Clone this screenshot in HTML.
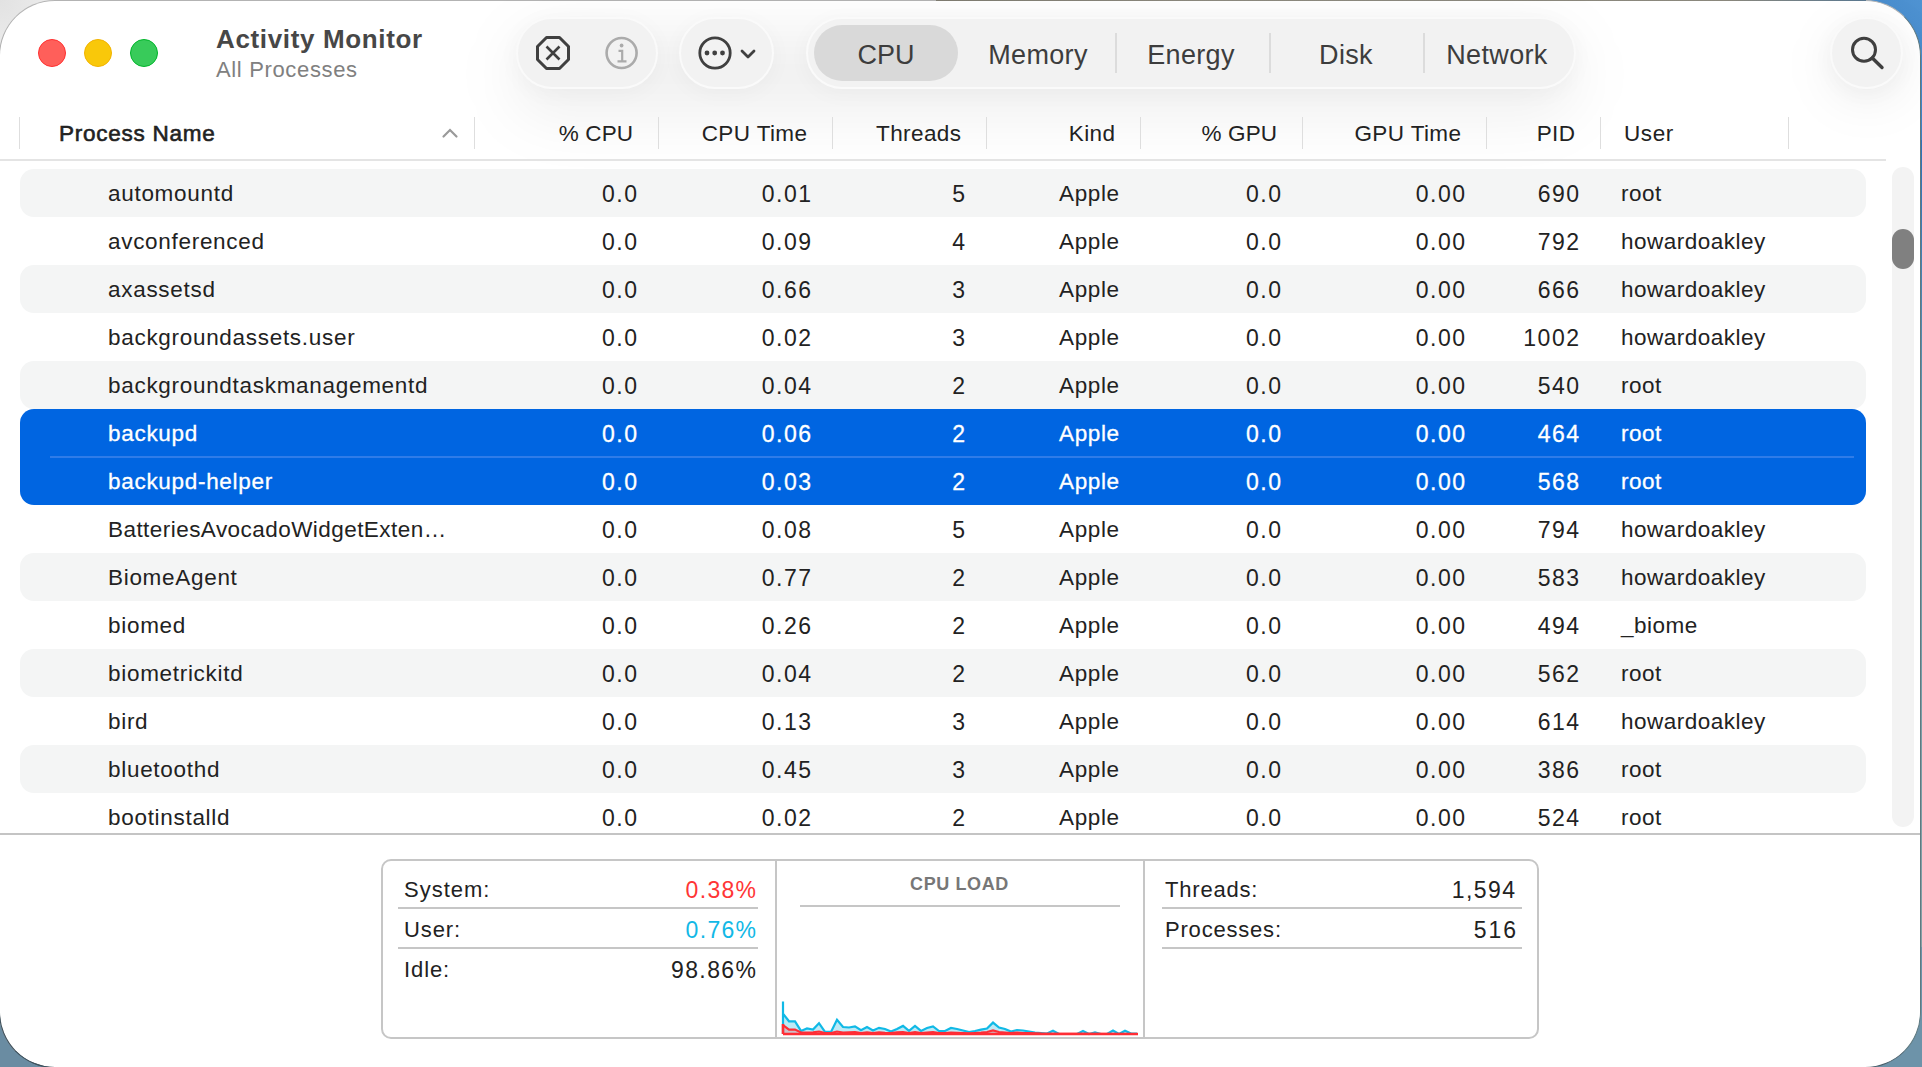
<!DOCTYPE html>
<html><head><meta charset="utf-8"><style>
html,body{margin:0;padding:0;width:1922px;height:1067px;overflow:hidden;background:#fff;}
body{position:relative;font-family:"Liberation Sans", sans-serif;}
.t{position:absolute;white-space:nowrap;}
.r{position:absolute;}
</style></head><body>
<div class="r" style="left:0;top:0;width:120px;height:120px;background:radial-gradient(circle at 0 0,#e2e2e2,#f3f3f3 90px)"></div><div class="r" style="left:1802px;top:0;width:120px;height:140px;background:linear-gradient(225deg,#4f93d2,#2e72b8)"></div><div class="r" style="left:1902px;top:140px;width:20px;height:807px;background:linear-gradient(180deg,#2e72b8,#6f9aa8 40%,#86a0a6)"></div><div class="r" style="left:0;top:947px;width:120px;height:120px;background:#6a8ca2"></div><div class="r" style="left:1802px;top:947px;width:120px;height:120px;background:#6d93a9"></div><div class="r" style="left:-1px;top:0;width:1922px;height:1068px;box-sizing:border-box;background:#fff;border:1px solid #b3b3b3;border-right-color:#5f7a80;border-bottom-color:#4a5f6a;border-left-color:#b0b0b0;border-radius:56px;"></div><div class="r" style="left:-1px;top:900px;width:200px;height:168px;box-sizing:border-box;border-left:1px solid #3e505c;border-bottom:1px solid #3e505c;border-bottom-left-radius:56px;"></div><div class="r" style="left:936px;top:0px;width:930px;height:1px;background:linear-gradient(90deg,#7e7b70,#8d8a7e 30%,#8a877c 85%,#5a7890);border-radius:0px;"></div><div class="r" style="left:38px;top:39px;width:26px;height:26px;border-radius:50%;background:#ff5f5a;border:1px solid #ff3030"></div><div class="r" style="left:84px;top:39px;width:26px;height:26px;border-radius:50%;background:#f9c80a;border:1px solid #f2b300"></div><div class="r" style="left:130px;top:39px;width:26px;height:26px;border-radius:50%;background:#38cb5a;border:1px solid #00b52a"></div><div class="t" style="left:216px;top:26.39px;font-size:26px;line-height:26px;color:#474747;font-weight:700;letter-spacing:0.65px;">Activity Monitor</div><div class="t" style="left:216px;top:58.58px;font-size:22px;line-height:22px;color:#808080;font-weight:400;letter-spacing:0.65px;">All Processes</div><div class="r" style="left:510px;top:28px;width:1070px;height:92px;border-radius:46px;background:rgba(0,0,0,0.055);filter:blur(28px)"></div><div class="r" style="left:1825px;top:25px;width:85px;height:80px;border-radius:40px;background:rgba(0,0,0,0.05);filter:blur(22px)"></div><div class="r" style="left:516px;top:17px;width:142px;height:72px;border-radius:36px;background:#f2f2f2;border:2px solid #fafafa;box-shadow:0 4px 22px rgba(0,0,0,0.035);box-sizing:border-box;"></div><div class="r" style="left:679px;top:17px;width:95px;height:72px;border-radius:36px;background:#f2f2f2;border:2px solid #fafafa;box-shadow:0 4px 22px rgba(0,0,0,0.035);box-sizing:border-box;"></div><div class="r" style="left:806px;top:17px;width:770px;height:72px;border-radius:36px;background:#f2f2f2;border:2px solid #fafafa;box-shadow:0 4px 22px rgba(0,0,0,0.035);box-sizing:border-box;"></div><div class="r" style="left:1830px;top:17px;width:73px;height:72px;border-radius:36px;background:#f2f2f2;border:2px solid #fafafa;box-shadow:0 4px 22px rgba(0,0,0,0.035);box-sizing:border-box;"></div><div class="r" style="left:814px;top:25px;width:144px;height:56px;background:#d9d9d9;border-radius:28px;"></div><div class="r" style="left:1115px;top:33px;width:1.5px;height:40px;background:#dcdcdc;border-radius:0px;"></div><div class="r" style="left:1269px;top:33px;width:1.5px;height:40px;background:#dcdcdc;border-radius:0px;"></div><div class="r" style="left:1423px;top:33px;width:1.5px;height:40px;background:#dcdcdc;border-radius:0px;"></div><div class="t" style="left:586px;width:600px;text-align:center;top:41.74px;font-size:27px;line-height:27px;color:#3d3d3d;font-weight:400;letter-spacing:0px;">CPU</div><div class="t" style="left:738px;width:600px;text-align:center;top:41.74px;font-size:27px;line-height:27px;color:#3d3d3d;font-weight:400;letter-spacing:0.35px;">Memory</div><div class="t" style="left:891px;width:600px;text-align:center;top:41.74px;font-size:27px;line-height:27px;color:#3d3d3d;font-weight:400;letter-spacing:0.35px;">Energy</div><div class="t" style="left:1046px;width:600px;text-align:center;top:41.74px;font-size:27px;line-height:27px;color:#3d3d3d;font-weight:400;letter-spacing:0.35px;">Disk</div><div class="t" style="left:1197px;width:600px;text-align:center;top:41.74px;font-size:27px;line-height:27px;color:#3d3d3d;font-weight:400;letter-spacing:0.35px;">Network</div><svg class="r" style="left:530px;top:30px" width="46" height="46" viewBox="0 0 46 46">
<polygon points="16.5,7.5 29.5,7.5 38.5,16.5 38.5,29.5 29.5,38.5 16.5,38.5 7.5,29.5 7.5,16.5" fill="none" stroke="#404040" stroke-width="3" stroke-linejoin="round"/>
<path d="M16.5 16.5 L29.5 29.5 M29.5 16.5 L16.5 29.5" stroke="#404040" stroke-width="2.6" stroke-linecap="butt"/>
</svg><svg class="r" style="left:598px;top:30px" width="46" height="46" viewBox="0 0 46 46">
<circle cx="23.6" cy="23" r="15" fill="none" stroke="#ababab" stroke-width="2.6"/>
<circle cx="23.6" cy="15.5" r="1.9" fill="#ababab"/>
<path d="M20.5 20.9 H24.2 V31.5 M19.5 31.4 H28.5" fill="none" stroke="#ababab" stroke-width="2.2"/>
</svg><svg class="r" style="left:692px;top:30px" width="80" height="46" viewBox="0 0 80 46">
<circle cx="23" cy="23" r="15.2" fill="none" stroke="#404040" stroke-width="2.8"/>
<circle cx="15" cy="23" r="2.4" fill="#404040"/><circle cx="22.7" cy="23" r="2.4" fill="#404040"/><circle cx="30.5" cy="23" r="2.4" fill="#404040"/>
<path d="M50 21 L56 27 L62 21" fill="none" stroke="#404040" stroke-width="2.8" stroke-linecap="round" stroke-linejoin="round"/>
</svg><svg class="r" style="left:1840px;top:26px" width="54" height="54" viewBox="0 0 54 54">
<circle cx="24" cy="23.7" r="11.5" fill="none" stroke="#3f3f3f" stroke-width="3"/>
<path d="M32.3 32 L42 41.5" stroke="#3f3f3f" stroke-width="3.4" stroke-linecap="round"/>
</svg><div class="r" style="left:18.5px;top:117px;width:1.5px;height:32px;background:#dedede;border-radius:0px;"></div><div class="r" style="left:473.5px;top:117px;width:1.5px;height:32px;background:#dedede;border-radius:0px;"></div><div class="r" style="left:657.5px;top:117px;width:1.5px;height:32px;background:#dedede;border-radius:0px;"></div><div class="r" style="left:831.5px;top:117px;width:1.5px;height:32px;background:#dedede;border-radius:0px;"></div><div class="r" style="left:985.5px;top:117px;width:1.5px;height:32px;background:#dedede;border-radius:0px;"></div><div class="r" style="left:1139.5px;top:117px;width:1.5px;height:32px;background:#dedede;border-radius:0px;"></div><div class="r" style="left:1301.5px;top:117px;width:1.5px;height:32px;background:#dedede;border-radius:0px;"></div><div class="r" style="left:1485.5px;top:117px;width:1.5px;height:32px;background:#dedede;border-radius:0px;"></div><div class="r" style="left:1599.5px;top:117px;width:1.5px;height:32px;background:#dedede;border-radius:0px;"></div><div class="r" style="left:1787.5px;top:117px;width:1.5px;height:32px;background:#dedede;border-radius:0px;"></div><div class="t" style="left:59px;top:122.95px;font-size:22.5px;line-height:22.5px;color:#222;-webkit-text-stroke:0.6px #222;font-weight:400;letter-spacing:0.75px;">Process Name</div><svg class="r" style="left:440px;top:125px" width="20" height="16" viewBox="0 0 20 16">
<path d="M3.5 11.5 L10 5 L16.5 11.5" fill="none" stroke="#9a9a9a" stroke-width="2.2" stroke-linecap="round"/></svg><div class="t" style="right:1288.90px;text-align:right;top:122.95px;font-size:22.5px;line-height:22.5px;color:#222;font-weight:400;letter-spacing:0.1px;">% CPU</div><div class="t" style="right:1114.60px;text-align:right;top:122.95px;font-size:22.5px;line-height:22.5px;color:#222;font-weight:400;letter-spacing:0.4px;">CPU Time</div><div class="t" style="right:960.60px;text-align:right;top:122.95px;font-size:22.5px;line-height:22.5px;color:#222;font-weight:400;letter-spacing:0.4px;">Threads</div><div class="t" style="right:806.60px;text-align:right;top:122.95px;font-size:22.5px;line-height:22.5px;color:#222;font-weight:400;letter-spacing:0.4px;">Kind</div><div class="t" style="right:644.90px;text-align:right;top:122.95px;font-size:22.5px;line-height:22.5px;color:#222;font-weight:400;letter-spacing:0.1px;">% GPU</div><div class="t" style="right:460.60px;text-align:right;top:122.95px;font-size:22.5px;line-height:22.5px;color:#222;font-weight:400;letter-spacing:0.4px;">GPU Time</div><div class="t" style="right:346.60px;text-align:right;top:122.95px;font-size:22.5px;line-height:22.5px;color:#222;font-weight:400;letter-spacing:0.4px;">PID</div><div class="t" style="left:1624px;top:122.95px;font-size:22.5px;line-height:22.5px;color:#222;font-weight:400;letter-spacing:0.6px;">User</div><div class="r" style="left:0px;top:159px;width:1886px;height:2px;background:#e4e4e4;border-radius:0px;"></div><div class="r" style="left:20px;top:169px;width:1846px;height:48px;background:#f4f5f5;border-radius:14px;"></div><div class="r" style="left:20px;top:265px;width:1846px;height:48px;background:#f4f5f5;border-radius:14px;"></div><div class="r" style="left:20px;top:361px;width:1846px;height:48px;background:#f4f5f5;border-radius:14px;"></div><div class="r" style="left:20px;top:553px;width:1846px;height:48px;background:#f4f5f5;border-radius:14px;"></div><div class="r" style="left:20px;top:649px;width:1846px;height:48px;background:#f4f5f5;border-radius:14px;"></div><div class="r" style="left:20px;top:745px;width:1846px;height:48px;background:#f4f5f5;border-radius:14px;"></div><div class="r" style="left:20px;top:409px;width:1846px;height:96px;background:#0065e1;border-radius:14px;"></div><div class="r" style="left:50px;top:456px;width:1804px;height:1.5px;background:#2f7ce8;border-radius:0px;"></div><div class="t" style="left:108px;top:182.95px;font-size:22.5px;line-height:22.5px;color:#222;font-weight:400;letter-spacing:0.7px;">automountd</div><div class="t" style="right:1283.50px;text-align:right;top:182.53px;font-size:23px;line-height:23px;color:#222;font-weight:400;letter-spacing:1.5px;">0.0</div><div class="t" style="right:1109.50px;text-align:right;top:182.53px;font-size:23px;line-height:23px;color:#222;font-weight:400;letter-spacing:1.5px;">0.01</div><div class="t" style="right:955.50px;text-align:right;top:182.53px;font-size:23px;line-height:23px;color:#222;font-weight:400;letter-spacing:1.5px;">5</div><div class="t" style="right:802.40px;text-align:right;top:182.95px;font-size:22.5px;line-height:22.5px;color:#222;font-weight:400;letter-spacing:0.6px;">Apple</div><div class="t" style="right:639.50px;text-align:right;top:182.53px;font-size:23px;line-height:23px;color:#222;font-weight:400;letter-spacing:1.5px;">0.0</div><div class="t" style="right:455.50px;text-align:right;top:182.53px;font-size:23px;line-height:23px;color:#222;font-weight:400;letter-spacing:1.5px;">0.00</div><div class="t" style="right:341.50px;text-align:right;top:182.53px;font-size:23px;line-height:23px;color:#222;font-weight:400;letter-spacing:1.5px;">690</div><div class="t" style="left:1621px;top:182.95px;font-size:22.5px;line-height:22.5px;color:#222;font-weight:400;letter-spacing:0.5px;">root</div><div class="t" style="left:108px;top:230.95px;font-size:22.5px;line-height:22.5px;color:#222;font-weight:400;letter-spacing:0.7px;">avconferenced</div><div class="t" style="right:1283.50px;text-align:right;top:230.53px;font-size:23px;line-height:23px;color:#222;font-weight:400;letter-spacing:1.5px;">0.0</div><div class="t" style="right:1109.50px;text-align:right;top:230.53px;font-size:23px;line-height:23px;color:#222;font-weight:400;letter-spacing:1.5px;">0.09</div><div class="t" style="right:955.50px;text-align:right;top:230.53px;font-size:23px;line-height:23px;color:#222;font-weight:400;letter-spacing:1.5px;">4</div><div class="t" style="right:802.40px;text-align:right;top:230.95px;font-size:22.5px;line-height:22.5px;color:#222;font-weight:400;letter-spacing:0.6px;">Apple</div><div class="t" style="right:639.50px;text-align:right;top:230.53px;font-size:23px;line-height:23px;color:#222;font-weight:400;letter-spacing:1.5px;">0.0</div><div class="t" style="right:455.50px;text-align:right;top:230.53px;font-size:23px;line-height:23px;color:#222;font-weight:400;letter-spacing:1.5px;">0.00</div><div class="t" style="right:341.50px;text-align:right;top:230.53px;font-size:23px;line-height:23px;color:#222;font-weight:400;letter-spacing:1.5px;">792</div><div class="t" style="left:1621px;top:230.95px;font-size:22.5px;line-height:22.5px;color:#222;font-weight:400;letter-spacing:0.5px;">howardoakley</div><div class="t" style="left:108px;top:278.95px;font-size:22.5px;line-height:22.5px;color:#222;font-weight:400;letter-spacing:0.7px;">axassetsd</div><div class="t" style="right:1283.50px;text-align:right;top:278.53px;font-size:23px;line-height:23px;color:#222;font-weight:400;letter-spacing:1.5px;">0.0</div><div class="t" style="right:1109.50px;text-align:right;top:278.53px;font-size:23px;line-height:23px;color:#222;font-weight:400;letter-spacing:1.5px;">0.66</div><div class="t" style="right:955.50px;text-align:right;top:278.53px;font-size:23px;line-height:23px;color:#222;font-weight:400;letter-spacing:1.5px;">3</div><div class="t" style="right:802.40px;text-align:right;top:278.95px;font-size:22.5px;line-height:22.5px;color:#222;font-weight:400;letter-spacing:0.6px;">Apple</div><div class="t" style="right:639.50px;text-align:right;top:278.53px;font-size:23px;line-height:23px;color:#222;font-weight:400;letter-spacing:1.5px;">0.0</div><div class="t" style="right:455.50px;text-align:right;top:278.53px;font-size:23px;line-height:23px;color:#222;font-weight:400;letter-spacing:1.5px;">0.00</div><div class="t" style="right:341.50px;text-align:right;top:278.53px;font-size:23px;line-height:23px;color:#222;font-weight:400;letter-spacing:1.5px;">666</div><div class="t" style="left:1621px;top:278.95px;font-size:22.5px;line-height:22.5px;color:#222;font-weight:400;letter-spacing:0.5px;">howardoakley</div><div class="t" style="left:108px;top:326.95px;font-size:22.5px;line-height:22.5px;color:#222;font-weight:400;letter-spacing:0.7px;">backgroundassets.user</div><div class="t" style="right:1283.50px;text-align:right;top:326.53px;font-size:23px;line-height:23px;color:#222;font-weight:400;letter-spacing:1.5px;">0.0</div><div class="t" style="right:1109.50px;text-align:right;top:326.53px;font-size:23px;line-height:23px;color:#222;font-weight:400;letter-spacing:1.5px;">0.02</div><div class="t" style="right:955.50px;text-align:right;top:326.53px;font-size:23px;line-height:23px;color:#222;font-weight:400;letter-spacing:1.5px;">3</div><div class="t" style="right:802.40px;text-align:right;top:326.95px;font-size:22.5px;line-height:22.5px;color:#222;font-weight:400;letter-spacing:0.6px;">Apple</div><div class="t" style="right:639.50px;text-align:right;top:326.53px;font-size:23px;line-height:23px;color:#222;font-weight:400;letter-spacing:1.5px;">0.0</div><div class="t" style="right:455.50px;text-align:right;top:326.53px;font-size:23px;line-height:23px;color:#222;font-weight:400;letter-spacing:1.5px;">0.00</div><div class="t" style="right:341.50px;text-align:right;top:326.53px;font-size:23px;line-height:23px;color:#222;font-weight:400;letter-spacing:1.5px;">1002</div><div class="t" style="left:1621px;top:326.95px;font-size:22.5px;line-height:22.5px;color:#222;font-weight:400;letter-spacing:0.5px;">howardoakley</div><div class="t" style="left:108px;top:374.95px;font-size:22.5px;line-height:22.5px;color:#222;font-weight:400;letter-spacing:0.7px;">backgroundtaskmanagementd</div><div class="t" style="right:1283.50px;text-align:right;top:374.53px;font-size:23px;line-height:23px;color:#222;font-weight:400;letter-spacing:1.5px;">0.0</div><div class="t" style="right:1109.50px;text-align:right;top:374.53px;font-size:23px;line-height:23px;color:#222;font-weight:400;letter-spacing:1.5px;">0.04</div><div class="t" style="right:955.50px;text-align:right;top:374.53px;font-size:23px;line-height:23px;color:#222;font-weight:400;letter-spacing:1.5px;">2</div><div class="t" style="right:802.40px;text-align:right;top:374.95px;font-size:22.5px;line-height:22.5px;color:#222;font-weight:400;letter-spacing:0.6px;">Apple</div><div class="t" style="right:639.50px;text-align:right;top:374.53px;font-size:23px;line-height:23px;color:#222;font-weight:400;letter-spacing:1.5px;">0.0</div><div class="t" style="right:455.50px;text-align:right;top:374.53px;font-size:23px;line-height:23px;color:#222;font-weight:400;letter-spacing:1.5px;">0.00</div><div class="t" style="right:341.50px;text-align:right;top:374.53px;font-size:23px;line-height:23px;color:#222;font-weight:400;letter-spacing:1.5px;">540</div><div class="t" style="left:1621px;top:374.95px;font-size:22.5px;line-height:22.5px;color:#222;font-weight:400;letter-spacing:0.5px;">root</div><div class="t" style="left:108px;top:422.95px;font-size:22.5px;line-height:22.5px;color:#fff;-webkit-text-stroke:0.3px #fff;font-weight:400;letter-spacing:0.7px;">backupd</div><div class="t" style="right:1283.50px;text-align:right;top:422.53px;font-size:23px;line-height:23px;color:#fff;-webkit-text-stroke:0.3px #fff;font-weight:400;letter-spacing:1.5px;">0.0</div><div class="t" style="right:1109.50px;text-align:right;top:422.53px;font-size:23px;line-height:23px;color:#fff;-webkit-text-stroke:0.3px #fff;font-weight:400;letter-spacing:1.5px;">0.06</div><div class="t" style="right:955.50px;text-align:right;top:422.53px;font-size:23px;line-height:23px;color:#fff;-webkit-text-stroke:0.3px #fff;font-weight:400;letter-spacing:1.5px;">2</div><div class="t" style="right:802.40px;text-align:right;top:422.95px;font-size:22.5px;line-height:22.5px;color:#fff;-webkit-text-stroke:0.3px #fff;font-weight:400;letter-spacing:0.6px;">Apple</div><div class="t" style="right:639.50px;text-align:right;top:422.53px;font-size:23px;line-height:23px;color:#fff;-webkit-text-stroke:0.3px #fff;font-weight:400;letter-spacing:1.5px;">0.0</div><div class="t" style="right:455.50px;text-align:right;top:422.53px;font-size:23px;line-height:23px;color:#fff;-webkit-text-stroke:0.3px #fff;font-weight:400;letter-spacing:1.5px;">0.00</div><div class="t" style="right:341.50px;text-align:right;top:422.53px;font-size:23px;line-height:23px;color:#fff;-webkit-text-stroke:0.3px #fff;font-weight:400;letter-spacing:1.5px;">464</div><div class="t" style="left:1621px;top:422.95px;font-size:22.5px;line-height:22.5px;color:#fff;-webkit-text-stroke:0.3px #fff;font-weight:400;letter-spacing:0.5px;">root</div><div class="t" style="left:108px;top:470.95px;font-size:22.5px;line-height:22.5px;color:#fff;-webkit-text-stroke:0.3px #fff;font-weight:400;letter-spacing:0.7px;">backupd-helper</div><div class="t" style="right:1283.50px;text-align:right;top:470.53px;font-size:23px;line-height:23px;color:#fff;-webkit-text-stroke:0.3px #fff;font-weight:400;letter-spacing:1.5px;">0.0</div><div class="t" style="right:1109.50px;text-align:right;top:470.53px;font-size:23px;line-height:23px;color:#fff;-webkit-text-stroke:0.3px #fff;font-weight:400;letter-spacing:1.5px;">0.03</div><div class="t" style="right:955.50px;text-align:right;top:470.53px;font-size:23px;line-height:23px;color:#fff;-webkit-text-stroke:0.3px #fff;font-weight:400;letter-spacing:1.5px;">2</div><div class="t" style="right:802.40px;text-align:right;top:470.95px;font-size:22.5px;line-height:22.5px;color:#fff;-webkit-text-stroke:0.3px #fff;font-weight:400;letter-spacing:0.6px;">Apple</div><div class="t" style="right:639.50px;text-align:right;top:470.53px;font-size:23px;line-height:23px;color:#fff;-webkit-text-stroke:0.3px #fff;font-weight:400;letter-spacing:1.5px;">0.0</div><div class="t" style="right:455.50px;text-align:right;top:470.53px;font-size:23px;line-height:23px;color:#fff;-webkit-text-stroke:0.3px #fff;font-weight:400;letter-spacing:1.5px;">0.00</div><div class="t" style="right:341.50px;text-align:right;top:470.53px;font-size:23px;line-height:23px;color:#fff;-webkit-text-stroke:0.3px #fff;font-weight:400;letter-spacing:1.5px;">568</div><div class="t" style="left:1621px;top:470.95px;font-size:22.5px;line-height:22.5px;color:#fff;-webkit-text-stroke:0.3px #fff;font-weight:400;letter-spacing:0.5px;">root</div><div class="t" style="left:108px;top:518.95px;font-size:22.5px;line-height:22.5px;color:#222;font-weight:400;letter-spacing:0.45px;">BatteriesAvocadoWidgetExten<span style="letter-spacing:-3px">…</span></div><div class="t" style="right:1283.50px;text-align:right;top:518.53px;font-size:23px;line-height:23px;color:#222;font-weight:400;letter-spacing:1.5px;">0.0</div><div class="t" style="right:1109.50px;text-align:right;top:518.53px;font-size:23px;line-height:23px;color:#222;font-weight:400;letter-spacing:1.5px;">0.08</div><div class="t" style="right:955.50px;text-align:right;top:518.53px;font-size:23px;line-height:23px;color:#222;font-weight:400;letter-spacing:1.5px;">5</div><div class="t" style="right:802.40px;text-align:right;top:518.95px;font-size:22.5px;line-height:22.5px;color:#222;font-weight:400;letter-spacing:0.6px;">Apple</div><div class="t" style="right:639.50px;text-align:right;top:518.53px;font-size:23px;line-height:23px;color:#222;font-weight:400;letter-spacing:1.5px;">0.0</div><div class="t" style="right:455.50px;text-align:right;top:518.53px;font-size:23px;line-height:23px;color:#222;font-weight:400;letter-spacing:1.5px;">0.00</div><div class="t" style="right:341.50px;text-align:right;top:518.53px;font-size:23px;line-height:23px;color:#222;font-weight:400;letter-spacing:1.5px;">794</div><div class="t" style="left:1621px;top:518.95px;font-size:22.5px;line-height:22.5px;color:#222;font-weight:400;letter-spacing:0.5px;">howardoakley</div><div class="t" style="left:108px;top:566.95px;font-size:22.5px;line-height:22.5px;color:#222;font-weight:400;letter-spacing:0.7px;">BiomeAgent</div><div class="t" style="right:1283.50px;text-align:right;top:566.53px;font-size:23px;line-height:23px;color:#222;font-weight:400;letter-spacing:1.5px;">0.0</div><div class="t" style="right:1109.50px;text-align:right;top:566.53px;font-size:23px;line-height:23px;color:#222;font-weight:400;letter-spacing:1.5px;">0.77</div><div class="t" style="right:955.50px;text-align:right;top:566.53px;font-size:23px;line-height:23px;color:#222;font-weight:400;letter-spacing:1.5px;">2</div><div class="t" style="right:802.40px;text-align:right;top:566.95px;font-size:22.5px;line-height:22.5px;color:#222;font-weight:400;letter-spacing:0.6px;">Apple</div><div class="t" style="right:639.50px;text-align:right;top:566.53px;font-size:23px;line-height:23px;color:#222;font-weight:400;letter-spacing:1.5px;">0.0</div><div class="t" style="right:455.50px;text-align:right;top:566.53px;font-size:23px;line-height:23px;color:#222;font-weight:400;letter-spacing:1.5px;">0.00</div><div class="t" style="right:341.50px;text-align:right;top:566.53px;font-size:23px;line-height:23px;color:#222;font-weight:400;letter-spacing:1.5px;">583</div><div class="t" style="left:1621px;top:566.95px;font-size:22.5px;line-height:22.5px;color:#222;font-weight:400;letter-spacing:0.5px;">howardoakley</div><div class="t" style="left:108px;top:614.95px;font-size:22.5px;line-height:22.5px;color:#222;font-weight:400;letter-spacing:0.7px;">biomed</div><div class="t" style="right:1283.50px;text-align:right;top:614.53px;font-size:23px;line-height:23px;color:#222;font-weight:400;letter-spacing:1.5px;">0.0</div><div class="t" style="right:1109.50px;text-align:right;top:614.53px;font-size:23px;line-height:23px;color:#222;font-weight:400;letter-spacing:1.5px;">0.26</div><div class="t" style="right:955.50px;text-align:right;top:614.53px;font-size:23px;line-height:23px;color:#222;font-weight:400;letter-spacing:1.5px;">2</div><div class="t" style="right:802.40px;text-align:right;top:614.95px;font-size:22.5px;line-height:22.5px;color:#222;font-weight:400;letter-spacing:0.6px;">Apple</div><div class="t" style="right:639.50px;text-align:right;top:614.53px;font-size:23px;line-height:23px;color:#222;font-weight:400;letter-spacing:1.5px;">0.0</div><div class="t" style="right:455.50px;text-align:right;top:614.53px;font-size:23px;line-height:23px;color:#222;font-weight:400;letter-spacing:1.5px;">0.00</div><div class="t" style="right:341.50px;text-align:right;top:614.53px;font-size:23px;line-height:23px;color:#222;font-weight:400;letter-spacing:1.5px;">494</div><div class="t" style="left:1621px;top:614.95px;font-size:22.5px;line-height:22.5px;color:#222;font-weight:400;letter-spacing:0.5px;">_biome</div><div class="t" style="left:108px;top:662.95px;font-size:22.5px;line-height:22.5px;color:#222;font-weight:400;letter-spacing:0.7px;">biometrickitd</div><div class="t" style="right:1283.50px;text-align:right;top:662.53px;font-size:23px;line-height:23px;color:#222;font-weight:400;letter-spacing:1.5px;">0.0</div><div class="t" style="right:1109.50px;text-align:right;top:662.53px;font-size:23px;line-height:23px;color:#222;font-weight:400;letter-spacing:1.5px;">0.04</div><div class="t" style="right:955.50px;text-align:right;top:662.53px;font-size:23px;line-height:23px;color:#222;font-weight:400;letter-spacing:1.5px;">2</div><div class="t" style="right:802.40px;text-align:right;top:662.95px;font-size:22.5px;line-height:22.5px;color:#222;font-weight:400;letter-spacing:0.6px;">Apple</div><div class="t" style="right:639.50px;text-align:right;top:662.53px;font-size:23px;line-height:23px;color:#222;font-weight:400;letter-spacing:1.5px;">0.0</div><div class="t" style="right:455.50px;text-align:right;top:662.53px;font-size:23px;line-height:23px;color:#222;font-weight:400;letter-spacing:1.5px;">0.00</div><div class="t" style="right:341.50px;text-align:right;top:662.53px;font-size:23px;line-height:23px;color:#222;font-weight:400;letter-spacing:1.5px;">562</div><div class="t" style="left:1621px;top:662.95px;font-size:22.5px;line-height:22.5px;color:#222;font-weight:400;letter-spacing:0.5px;">root</div><div class="t" style="left:108px;top:710.95px;font-size:22.5px;line-height:22.5px;color:#222;font-weight:400;letter-spacing:0.7px;">bird</div><div class="t" style="right:1283.50px;text-align:right;top:710.53px;font-size:23px;line-height:23px;color:#222;font-weight:400;letter-spacing:1.5px;">0.0</div><div class="t" style="right:1109.50px;text-align:right;top:710.53px;font-size:23px;line-height:23px;color:#222;font-weight:400;letter-spacing:1.5px;">0.13</div><div class="t" style="right:955.50px;text-align:right;top:710.53px;font-size:23px;line-height:23px;color:#222;font-weight:400;letter-spacing:1.5px;">3</div><div class="t" style="right:802.40px;text-align:right;top:710.95px;font-size:22.5px;line-height:22.5px;color:#222;font-weight:400;letter-spacing:0.6px;">Apple</div><div class="t" style="right:639.50px;text-align:right;top:710.53px;font-size:23px;line-height:23px;color:#222;font-weight:400;letter-spacing:1.5px;">0.0</div><div class="t" style="right:455.50px;text-align:right;top:710.53px;font-size:23px;line-height:23px;color:#222;font-weight:400;letter-spacing:1.5px;">0.00</div><div class="t" style="right:341.50px;text-align:right;top:710.53px;font-size:23px;line-height:23px;color:#222;font-weight:400;letter-spacing:1.5px;">614</div><div class="t" style="left:1621px;top:710.95px;font-size:22.5px;line-height:22.5px;color:#222;font-weight:400;letter-spacing:0.5px;">howardoakley</div><div class="t" style="left:108px;top:758.95px;font-size:22.5px;line-height:22.5px;color:#222;font-weight:400;letter-spacing:0.7px;">bluetoothd</div><div class="t" style="right:1283.50px;text-align:right;top:758.53px;font-size:23px;line-height:23px;color:#222;font-weight:400;letter-spacing:1.5px;">0.0</div><div class="t" style="right:1109.50px;text-align:right;top:758.53px;font-size:23px;line-height:23px;color:#222;font-weight:400;letter-spacing:1.5px;">0.45</div><div class="t" style="right:955.50px;text-align:right;top:758.53px;font-size:23px;line-height:23px;color:#222;font-weight:400;letter-spacing:1.5px;">3</div><div class="t" style="right:802.40px;text-align:right;top:758.95px;font-size:22.5px;line-height:22.5px;color:#222;font-weight:400;letter-spacing:0.6px;">Apple</div><div class="t" style="right:639.50px;text-align:right;top:758.53px;font-size:23px;line-height:23px;color:#222;font-weight:400;letter-spacing:1.5px;">0.0</div><div class="t" style="right:455.50px;text-align:right;top:758.53px;font-size:23px;line-height:23px;color:#222;font-weight:400;letter-spacing:1.5px;">0.00</div><div class="t" style="right:341.50px;text-align:right;top:758.53px;font-size:23px;line-height:23px;color:#222;font-weight:400;letter-spacing:1.5px;">386</div><div class="t" style="left:1621px;top:758.95px;font-size:22.5px;line-height:22.5px;color:#222;font-weight:400;letter-spacing:0.5px;">root</div><div class="t" style="left:108px;top:806.95px;font-size:22.5px;line-height:22.5px;color:#222;font-weight:400;letter-spacing:0.7px;">bootinstalld</div><div class="t" style="right:1283.50px;text-align:right;top:806.53px;font-size:23px;line-height:23px;color:#222;font-weight:400;letter-spacing:1.5px;">0.0</div><div class="t" style="right:1109.50px;text-align:right;top:806.53px;font-size:23px;line-height:23px;color:#222;font-weight:400;letter-spacing:1.5px;">0.02</div><div class="t" style="right:955.50px;text-align:right;top:806.53px;font-size:23px;line-height:23px;color:#222;font-weight:400;letter-spacing:1.5px;">2</div><div class="t" style="right:802.40px;text-align:right;top:806.95px;font-size:22.5px;line-height:22.5px;color:#222;font-weight:400;letter-spacing:0.6px;">Apple</div><div class="t" style="right:639.50px;text-align:right;top:806.53px;font-size:23px;line-height:23px;color:#222;font-weight:400;letter-spacing:1.5px;">0.0</div><div class="t" style="right:455.50px;text-align:right;top:806.53px;font-size:23px;line-height:23px;color:#222;font-weight:400;letter-spacing:1.5px;">0.00</div><div class="t" style="right:341.50px;text-align:right;top:806.53px;font-size:23px;line-height:23px;color:#222;font-weight:400;letter-spacing:1.5px;">524</div><div class="t" style="left:1621px;top:806.95px;font-size:22.5px;line-height:22.5px;color:#222;font-weight:400;letter-spacing:0.5px;">root</div><div class="r" style="left:1892px;top:167px;width:22px;height:660px;background:#f3f3f3;border-radius:11px;"></div><div class="r" style="left:1892px;top:229px;width:22px;height:40px;background:#808080;border-radius:11px;"></div><div class="r" style="left:0px;top:833px;width:1920px;height:2px;background:#c4c4c4;border-radius:0px;"></div><div class="r" style="left:381px;top:859px;width:1158px;height:180px;border:2px solid #c6c6c6;border-radius:10px;box-sizing:border-box"></div><div class="r" style="left:775px;top:860px;width:2px;height:178px;background:#c6c6c6;border-radius:0px;"></div><div class="r" style="left:1143px;top:860px;width:2px;height:178px;background:#c6c6c6;border-radius:0px;"></div><div class="t" style="left:404px;top:879.38px;font-size:22px;line-height:22px;color:#222;font-weight:400;letter-spacing:1.0px;">System:</div><div class="t" style="right:1164.70px;text-align:right;top:878.53px;font-size:23px;line-height:23px;color:#ff3535;font-weight:400;letter-spacing:1.3px;">0.38%</div><div class="r" style="left:398px;top:907px;width:360px;height:2px;background:#c6c6c6;border-radius:0px;"></div><div class="t" style="left:404px;top:919.38px;font-size:22px;line-height:22px;color:#222;font-weight:400;letter-spacing:0.9px;">User:</div><div class="t" style="right:1164.70px;text-align:right;top:918.53px;font-size:23px;line-height:23px;color:#12b8e6;font-weight:400;letter-spacing:1.3px;">0.76%</div><div class="r" style="left:398px;top:947px;width:360px;height:2px;background:#c6c6c6;border-radius:0px;"></div><div class="t" style="left:404px;top:959.38px;font-size:22px;line-height:22px;color:#222;font-weight:400;letter-spacing:0.9px;">Idle:</div><div class="t" style="right:1164.60px;text-align:right;top:958.53px;font-size:23px;line-height:23px;color:#222;font-weight:400;letter-spacing:1.4px;">98.86%</div><div class="t" style="left:659.5px;width:600px;text-align:center;top:874.76px;font-size:18px;line-height:18px;color:#777;font-weight:700;letter-spacing:0.6px;">CPU LOAD</div><div class="r" style="left:800px;top:905px;width:320px;height:2px;background:#c6c6c6;border-radius:0px;"></div><div class="t" style="left:1165px;top:879.38px;font-size:22px;line-height:22px;color:#222;font-weight:400;letter-spacing:0.8px;">Threads:</div><div class="t" style="right:405.60px;text-align:right;top:878.53px;font-size:23px;line-height:23px;color:#222;font-weight:400;letter-spacing:1.4px;">1,594</div><div class="r" style="left:1162px;top:907px;width:360px;height:2px;background:#c6c6c6;border-radius:0px;"></div><div class="t" style="left:1165px;top:919.38px;font-size:22px;line-height:22px;color:#222;font-weight:400;letter-spacing:0.8px;">Processes:</div><div class="t" style="right:404.00px;text-align:right;top:918.53px;font-size:23px;line-height:23px;color:#222;font-weight:400;letter-spacing:2.0px;">516</div><div class="r" style="left:1162px;top:947px;width:360px;height:2px;background:#c6c6c6;border-radius:0px;"></div><svg class="r" style="left:0;top:0" width="1922" height="1067" viewBox="0 0 1922 1067">
<polygon points="783,1034 783,1001.5 783,1013.6 789,1021.3 795,1021.3 801,1030.9 807,1028.5 813,1029.5 819,1023.2 825,1031.9 831,1031.9 837,1019.8 843,1027 849,1027.5 855,1026.4 861,1030.2 867,1027 873,1030.4 879,1027.8 885,1029 891,1031.6 897,1029 903,1025.9 909,1030.9 915,1026 921,1030.9 927,1028 933,1026.4 939,1031 945,1031 951,1028 957,1029 963,1030.5 969,1032 975,1031 981,1029.6 987,1028.5 993,1022.6 999,1027.6 1005,1029 1011,1031.5 1017,1030 1023,1030.5 1029,1031.5 1035,1032.5 1041,1033 1047,1033.5 1053,1030.7 1059,1034 1065,1034 1071,1034 1077,1034 1083,1031 1089,1034 1095,1032.5 1101,1034 1107,1034 1113,1030.6 1119,1034 1125,1030.7 1131,1033.5 1137,1033.5 1137,1034" fill="#bdeaf6"/>
<polygon points="783,1034 783,1025.1 789,1029.6 795,1029.6 801,1032.5 807,1032.5 813,1032.3 819,1031.5 825,1033 831,1033 837,1031.5 843,1032.5 849,1032.3 855,1032 861,1033 867,1032.3 873,1033 879,1032.3 885,1032.8 891,1033 897,1032.3 903,1032 909,1033 915,1032 921,1033 927,1032.5 933,1032 939,1033 945,1033 951,1032.5 957,1032.8 963,1033 969,1033.3 975,1033 981,1032.6 987,1032 993,1030.5 999,1032 1005,1032.5 1011,1033 1017,1032.5 1023,1033 1029,1033 1035,1033.3 1041,1033.5 1137,1034 1137,1034" fill="#cdbfc7"/>
<polyline points="783,1034 783,1001.5 783,1013.6 789,1021.3 795,1021.3 801,1030.9 807,1028.5 813,1029.5 819,1023.2 825,1031.9 831,1031.9 837,1019.8 843,1027 849,1027.5 855,1026.4 861,1030.2 867,1027 873,1030.4 879,1027.8 885,1029 891,1031.6 897,1029 903,1025.9 909,1030.9 915,1026 921,1030.9 927,1028 933,1026.4 939,1031 945,1031 951,1028 957,1029 963,1030.5 969,1032 975,1031 981,1029.6 987,1028.5 993,1022.6 999,1027.6 1005,1029 1011,1031.5 1017,1030 1023,1030.5 1029,1031.5 1035,1032.5 1041,1033 1047,1033.5 1053,1030.7 1059,1034 1065,1034 1071,1034 1077,1034 1083,1031 1089,1034 1095,1032.5 1101,1034 1107,1034 1113,1030.6 1119,1034 1125,1030.7 1131,1033.5 1137,1033.5" fill="none" stroke="#10b9e6" stroke-width="2.2" stroke-linejoin="miter"/>
<polyline points="783,1025.1 789,1029.6 795,1029.6 801,1032.5 807,1032.5 813,1032.3 819,1031.5 825,1033 831,1033 837,1031.5 843,1032.5 849,1032.3 855,1032 861,1033 867,1032.3 873,1033 879,1032.3 885,1032.8 891,1033 897,1032.3 903,1032 909,1033 915,1032 921,1033 927,1032.5 933,1032 939,1033 945,1033 951,1032.5 957,1032.8 963,1033 969,1033.3 975,1033 981,1032.6 987,1032 993,1030.5 999,1032 1005,1032.5 1011,1033 1017,1032.5 1023,1033 1029,1033 1035,1033.3 1041,1033.5 1137,1034" fill="none" stroke="#ff2d35" stroke-width="2.2"/>
<path d="M783 1034 H1138 M783 1034 V1024" stroke="#ff2d35" stroke-width="2.6"/>
</svg>
</body></html>
